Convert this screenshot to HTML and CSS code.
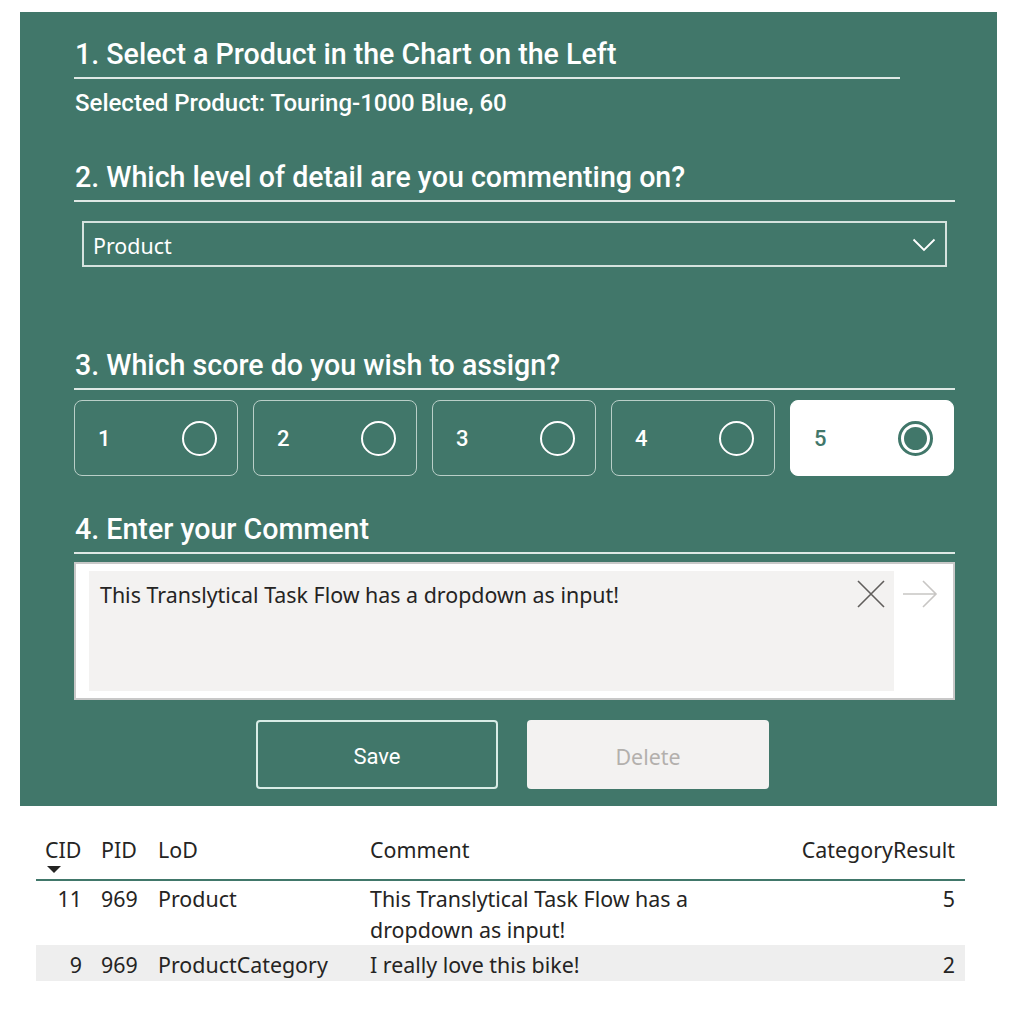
FILE: index.html
```html
<!DOCTYPE html>
<html>
<head>
<meta charset="utf-8">
<link rel="stylesheet" href="styles.css">
</head>
<body>
<div class="panel">
  <div class="heading h-short">1. Select a Product in the Chart on the Left</div>
  <div class="selected">Selected Product: Touring-1000 Blue, 60</div>

  <div class="heading h-two">2. Which level of detail are you commenting on?</div>
  <div class="dropdown">
    <span class="dd-text">Product</span>
    <svg class="chev" width="24" height="14" viewBox="0 0 24 14"><path d="M1.5 1.5 L12 12 L22.5 1.5" fill="none" stroke="#ffffff" stroke-width="1.8"/></svg>
  </div>

  <div class="heading h-three">3. Which score do you wish to assign?</div>
  <div class="scores">
    <div class="score"><span class="num">1</span><span class="radio"></span></div>
    <div class="score"><span class="num">2</span><span class="radio"></span></div>
    <div class="score"><span class="num">3</span><span class="radio"></span></div>
    <div class="score"><span class="num">4</span><span class="radio"></span></div>
    <div class="score selected-score"><span class="num">5</span><span class="radio on"></span></div>
  </div>

  <div class="heading h-four">4. Enter your Comment</div>
  <div class="comment">
    <div class="comment-inner">
      <span class="comment-text">This Translytical Task Flow has a dropdown as input!</span>
      <svg class="x-icon" width="30" height="30" viewBox="0 0 30 30"><path d="M2 2 L28 28 M28 2 L2 28" stroke="#605e5c" stroke-width="1.6" fill="none"/></svg>
    </div>
    <svg class="arrow-icon" width="36" height="28" viewBox="0 0 36 28"><path d="M1 14 H34 M21 1 L34 14 L21 27" stroke="#c8c6c4" stroke-width="1.6" fill="none"/></svg>
  </div>

  <div class="actions">
    <div class="btn save">Save</div>
    <div class="btn delete">Delete</div>
  </div>
</div>

<div class="table">
  <div class="row head">
    <div class="c cid">CID<span class="sort"></span></div>
    <div class="c pid">PID</div>
    <div class="c lod">LoD</div>
    <div class="c com">Comment</div>
    <div class="c res">CategoryResult</div>
  </div>
  <div class="row r1">
    <div class="c cid num-r">11</div>
    <div class="c pid">969</div>
    <div class="c lod">Product</div>
    <div class="c com">This Translytical Task Flow has a dropdown as input!</div>
    <div class="c res">5</div>
  </div>
  <div class="row alt">
    <div class="c cid num-r">9</div>
    <div class="c pid">969</div>
    <div class="c lod">ProductCategory</div>
    <div class="c com">I really love this bike!</div>
    <div class="c res">2</div>
  </div>
</div>
</body>
</html>
```

FILE: styles.css
```css
* { box-sizing: border-box; }
body {
  margin: 0;
  background: #ffffff;
  font-family: "Noto Sans", "Open Sans", sans-serif;
}
.panel {
  margin: 12px 0 0 20px;
  width: 977px;
  height: 794px;
  background: #41776a;
  padding: 26px 42px 0 54px;
  color: #ffffff;
}
.heading {
  font-family: "Roboto", "DejaVu Sans", sans-serif;
  font-weight: 500;
  font-size: 28.6px;
  line-height: 32px;
  padding-left: 1px;
  padding-bottom: 7px;
  border-bottom: 2px solid #dfe8e5;
  width: 881px;
  white-space: nowrap;
}
.h-short { width: 826px; }
.h-two { margin-top: 44px; }
.h-three { margin-top: 82px; }
.h-four { margin-top: 37px; }
.selected {
  font-family: "Roboto", sans-serif;
  font-weight: 500;
  font-size: 24px;
  line-height: 28px;
  margin-top: 10px;
  padding-left: 1px;
  white-space: nowrap;
}
.dropdown {
  margin: 19px 0 0 8px;
  width: 865px;
  height: 46px;
  border: 2px solid #d5e2de;
  display: flex;
  align-items: center;
  justify-content: space-between;
  padding: 3px 9px 0 9px;
}
.dd-text { font-size: 21.4px; }
.chev { margin-top: -2px; }
.scores {
  margin-top: 10px;
  display: flex;
  gap: 15px;
  width: 881px;
}
.score {
  width: 164px;
  height: 76px;
  border: 1.5px solid #b9cfc8;
  border-radius: 8px;
  display: flex;
  align-items: center;
  justify-content: space-between;
  padding: 0 20px 0 23px;
}
.num {
  font-family: "Roboto", sans-serif;
  font-weight: 500;
  font-size: 22px;
}
.radio {
  width: 35px;
  height: 35px;
  border: 2px solid #ffffff;
  border-radius: 50%;
  display: flex;
  align-items: center;
  justify-content: center;
}
.selected-score {
  background: #ffffff;
  border-color: #ffffff;
  color: #41776a;
}
.radio.on { border: 3px solid #41776a; }
.radio.on::after {
  content: "";
  width: 23px;
  height: 23px;
  border-radius: 50%;
  background: #41776a;
}
.comment {
  margin-top: 8px;
  width: 881px;
  height: 138px;
  background: #ffffff;
  border: 2px solid #c8c8c8;
  display: flex;
  padding: 7px 0 7px 13px;
}
.comment-inner {
  width: 805px;
  background: #f3f2f1;
  display: flex;
  justify-content: space-between;
  align-items: flex-start;
  padding: 10px 8px 0 11px;
}
.comment-text {
  font-size: 21.4px;
  color: #252423;
  line-height: 28px;
}
.x-icon { margin-top: -2px; }
.arrow-icon { margin: 9px 0 0 8px; }
.actions {
  margin-top: 20px;
  display: flex;
  gap: 29px;
  padding-left: 182px;
}
.btn {
  width: 242px;
  height: 69px;
  border-radius: 4px;
  display: flex;
  align-items: center;
  justify-content: center;
  font-size: 21.4px;
  padding-top: 3px;
}
.save {
  border: 2px solid #d8ece6;
  font-family: "Roboto", sans-serif;
  font-size: 22px;
}
.delete {
  background: #f3f2f1;
  color: #b3b0ad;
}
.table {
  margin: 28px 0 0 36px;
  width: 929px;
  color: #252423;
  font-size: 21.4px;
}
.row {
  display: grid;
  grid-template-columns: 54px 59px 211px 360px 1fr;
  line-height: 31px;
}
.row.head {
  border-bottom: 2px solid #41776a;
  padding-bottom: 14px;
}
.row.r1 { padding: 2px 0 0; }
.row.alt { background: #eeeeee; padding: 4px 0 1px; }
.c { white-space: nowrap; }
.cid { padding-left: 9px; position: relative; }
.num-r { text-align: right; padding-right: 8px; padding-left: 0; }
.pid { padding-left: 11px; }
.lod { padding-left: 9px; }
.com { white-space: normal; padding-left: 10px; }
.res { text-align: right; padding-right: 10px; }
.sort {
  position: absolute;
  left: 11px;
  top: 32px;
  width: 0; height: 0;
  border-left: 7px solid transparent;
  border-right: 7px solid transparent;
  border-top: 7px solid #252423;
}
```
